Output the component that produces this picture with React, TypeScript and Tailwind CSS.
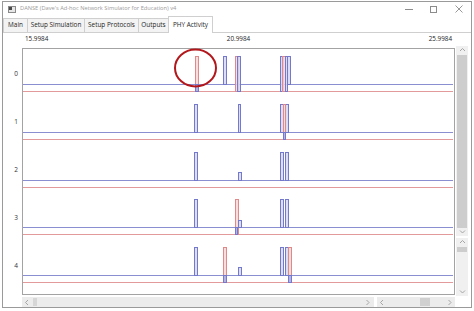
import React from "react";

const BASE = [85, 133, 181, 228, 276];

type P = { k: "rx" | "tx" | "dip"; x: number; w: number; t: number; b: number };

function rowPulses(i: number): P[] {
  const B = BASE[i];
  const R = B + 7;
  const T = B - 28;
  switch (i) {
    case 0:
      return [
        { k: "tx", x: 195, w: 3, t: T, b: R },
        { k: "dip", x: 195, w: 3, t: B, b: R },
        { k: "rx", x: 223, w: 3, t: T, b: B },
        { k: "tx", x: 235, w: 3, t: T, b: R },
        { k: "rx", x: 237, w: 3, t: T, b: R },
        { k: "rx", x: 280, w: 3, t: T, b: R },
        { k: "tx", x: 282, w: 3, t: T, b: R },
        { k: "rx", x: 285, w: 2, t: T, b: R },
        { k: "rx", x: 287, w: 3, t: T, b: B },
      ];
    case 1:
      return [
        { k: "rx", x: 194, w: 3, t: T, b: B },
        { k: "rx", x: 238, w: 2, t: T, b: B },
        { k: "rx", x: 280, w: 3, t: T, b: B },
        { k: "rx", x: 285, w: 3, t: T, b: B },
        { k: "tx", x: 283, w: 2, t: T, b: R },
        { k: "dip", x: 283, w: 2, t: B, b: R },
      ];
    case 2:
      return [
        { k: "rx", x: 194, w: 3, t: T, b: B },
        { k: "rx", x: 238, w: 3, t: B - 8, b: B },
        { k: "rx", x: 280, w: 3, t: T, b: B },
        { k: "rx", x: 285, w: 3, t: T, b: B },
      ];
    case 3:
      return [
        { k: "rx", x: 194, w: 3, t: T, b: B },
        { k: "tx", x: 235, w: 3, t: T, b: R },
        { k: "dip", x: 235, w: 2, t: B, b: R },
        { k: "rx", x: 238, w: 3, t: B - 7, b: B },
        { k: "rx", x: 280, w: 3, t: T, b: B },
        { k: "rx", x: 285, w: 3, t: T, b: B },
      ];
    default:
      return [
        { k: "rx", x: 194, w: 3, t: T, b: B },
        { k: "tx", x: 223, w: 3, t: T, b: R },
        { k: "dip", x: 223, w: 3, t: B, b: R },
        { k: "rx", x: 238, w: 3, t: B - 8, b: B },
        { k: "rx", x: 280, w: 3, t: T, b: B },
        { k: "rx", x: 285, w: 3, t: T, b: B },
        { k: "tx", x: 288, w: 3, t: T, b: R },
        { k: "dip", x: 288, w: 3, t: B, b: R },
      ];
  }
}

const BLUE = "#8a8fd2";
const BLUE_FILL = "#d6d7f6";
const RED = "#e39a9a";
const RED_FILL = "#f8d6d6";

function Pulse({ p }: { p: P }) {
  const stroke = p.k === "tx" ? "#de8a8a" : "#7479cc";
  const fill = p.k === "tx" ? RED_FILL : p.k === "dip" ? "#a9ace4" : BLUE_FILL;
  return (
    <rect
      x={p.x + 0.5}
      y={p.t + 0.5}
      width={p.w}
      height={p.b - p.t}
      fill={fill}
      fillOpacity={0.85}
      stroke={stroke}
      strokeWidth={1}
    />
  );
}

function Chevron({ dir }: { dir: "up" | "down" | "left" | "right" }) {
  const pts =
    dir === "up"
      ? "1,4 3.5,1.5 6,4"
      : dir === "down"
      ? "1,1.5 3.5,4 6,1.5"
      : dir === "left"
      ? "4,1 1.5,3.5 4,6"
      : "1.5,1 4,3.5 1.5,6";
  return (
    <svg width={7} height={7} viewBox="0 0 7 7" className="block">
      <polyline points={pts} fill="none" stroke="#a6a6a6" strokeWidth={1} />
    </svg>
  );
}

const TABS = [
  { label: "Main", w: "w-[24px]" },
  { label: "Setup Simulation", w: "w-[57px]" },
  { label: "Setup Protocols", w: "w-[54px]" },
  { label: "Outputs", w: "w-[30px]" },
];

export default function App() {
  return (
    <div
      className="w-[474px] h-[311px] bg-white overflow-hidden"
      style={{ fontFamily: '"Open Sans", "Noto Sans", sans-serif' }}
    >
      <div className="ml-[2px] mt-[1px] w-[470px] h-[307px] border border-[#9a9a9a] flex flex-col">
        {/* Title bar */}
        <div className="h-[15px] flex items-center">
          <svg width={8} height={7} viewBox="0 0 8 7" className="ml-[5px] block">
            <rect x={0.5} y={0.5} width={7} height={6} fill="#e6e6e6" stroke="#8a8a8a" />
            <rect x={1} y={1} width={3} height={3} fill="#4a4a4a" />
          </svg>
          <span className="ml-[4px] text-[5.7px] leading-none text-[#9b9b9b] whitespace-nowrap">
            DANSE (Dave's Ad-hoc Network Simulator for Education) v4
          </span>
          <div className="flex-1" />
          <div className="flex items-center h-full">
            <div className="w-[25px] h-full flex items-center justify-center">
              <div className="w-[8px] h-px bg-[#8c8c8c]" />
            </div>
            <div className="w-[25px] h-full flex items-center justify-center">
              <div className="w-[7px] h-[7px] border border-[#8c8c8c]" />
            </div>
            <div className="w-[25px] h-full flex items-center justify-center">
              <svg width={8} height={8} viewBox="0 0 8 8" className="block">
                <path d="M0.5 0.5 L7.5 7.5 M7.5 0.5 L0.5 7.5" stroke="#8c8c8c" strokeWidth={0.9} />
              </svg>
            </div>
          </div>
        </div>

        {/* Tab strip */}
        <div className="h-[17px] flex items-end border-b border-[#cfcfcf]">
          {TABS.map((t) => (
            <div
              key={t.label}
              className={`${t.w} h-[14px] bg-[#f3f3f3] border-l border-t border-[#cfcfcf] flex items-center justify-center text-[6.4px] leading-none text-[#1e1e1e] whitespace-nowrap`}
            >
              {t.label}
            </div>
          ))}
          <div className="w-[45px] h-[17px] mb-[-1px] bg-white border border-b-0 border-[#cfcfcf] flex items-center justify-center text-[6.4px] leading-none text-[#1e1e1e] whitespace-nowrap">
            PHY Activity
          </div>
        </div>

        {/* Content */}
        <div className="flex-1 flex flex-col">
          {/* time labels */}
          <div className="h-[13px] flex items-center justify-between pl-[22px] pr-[19px] text-[6.3px] leading-none text-[#222]">
            <span>15.9984</span>
            <span>20.9984</span>
            <span>25.9984</span>
          </div>

          {/* main */}
          <div className="h-[250px] flex">
            <div className="w-[19px] flex flex-col pt-[4px]">
              {[0, 1, 2, 3, 4].map((n) => (
                <div
                  key={n}
                  className="h-[48px] flex items-center justify-end pr-[4px] text-[6.5px] leading-none text-[#333]"
                >
                  {n}
                </div>
              ))}
            </div>

            <div className="mt-[2px] w-[433px] h-[247px] border border-[#a3a3a3]">
              <svg
                width={431}
                height={245}
                viewBox="23 50 431 245"
                className="block overflow-visible"
                shapeRendering="crispEdges"
              >
                {BASE.map((B, i) => (
                  <g key={i}>
                    <line x1={23} x2={453} y1={B + 0.5} y2={B + 0.5} stroke={BLUE} strokeWidth={1} />
                    <line x1={23} x2={453} y1={B + 7.5} y2={B + 7.5} stroke={RED} strokeWidth={1} />
                    {rowPulses(i).map((p, j) => (
                      <Pulse key={j} p={p} />
                    ))}
                  </g>
                ))}
                <ellipse
                  cx={195.5}
                  cy={69}
                  rx={20.5}
                  ry={18.5}
                  fill="none"
                  stroke="#b3171c"
                  strokeWidth={2}
                  shapeRendering="geometricPrecision"
                />
              </svg>
            </div>

            <div className="ml-[1px] w-[12px] flex flex-col">
              <div className="h-[190px] bg-[#f0f0f0] flex flex-col">
                <div className="h-[8px] flex items-center justify-center">
                  <Chevron dir="up" />
                </div>
                <div className="mt-px mx-[1px] h-[173px] bg-[#cdcdcd]" />
                <div className="flex-1" />
                <div className="h-[8px] flex items-center justify-center">
                  <Chevron dir="down" />
                </div>
              </div>
              <div className="mt-[2px] flex-1 bg-[#f0f0f0] flex flex-col">
                <div className="h-[8px] flex items-center justify-center">
                  <Chevron dir="up" />
                </div>
                <div className="mt-[1px] mx-[1px] h-[5px] bg-[#cdcdcd]" />
                <div className="flex-1" />
                <div className="h-[8px] flex items-center justify-center">
                  <Chevron dir="down" />
                </div>
              </div>
            </div>
          </div>

          {/* horizontal scrollbars */}
          <div className="mt-[1px] h-[10px] flex pl-[19px]">
            <div className="w-[352px] bg-[#ececec] flex items-center">
              <div className="w-[10px] flex justify-center">
                <Chevron dir="left" />
              </div>
              <div className="ml-[1px] w-[4px] h-[8px] bg-[#d6d6d6]" />
              <div className="flex-1" />
              <div className="w-[10px] mr-[1px] flex justify-center">
                <Chevron dir="right" />
              </div>
            </div>
            <div className="ml-[3px] w-[78px] bg-[#ececec] flex items-center">
              <div className="w-[10px] flex justify-center">
                <Chevron dir="left" />
              </div>
              <div className="ml-[33px] w-[10px] h-[8px] bg-[#d0d0d0]" />
              <div className="flex-1" />
              <div className="w-[10px] flex justify-center">
                <Chevron dir="right" />
              </div>
            </div>
          </div>
        </div>
      </div>
    </div>
  );
}
